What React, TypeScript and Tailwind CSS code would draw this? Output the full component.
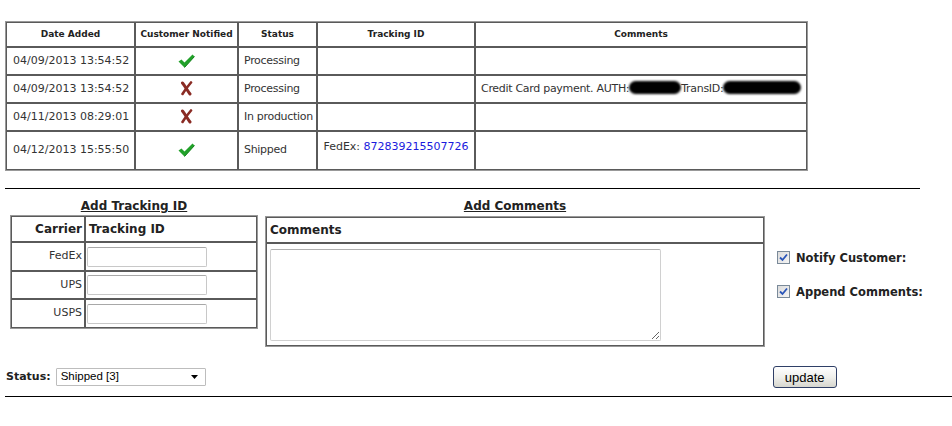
import React from "react";

type Row = {
  date: string;
  notified: boolean;
  status: string;
  tracking?: boolean;
  comment?: boolean;
  tall?: boolean;
};

const rows: Row[] = [
  { date: "04/09/2013 13:54:52", notified: true, status: "Processing" },
  { date: "04/09/2013 13:54:52", notified: false, status: "Processing", comment: true },
  { date: "04/11/2013 08:29:01", notified: false, status: "In production" },
  { date: "04/12/2013 15:55:50", notified: true, status: "Shipped", tracking: true, tall: true },
];

function Check() {
  return (
    <svg width="17" height="14" viewBox="0 0 17 14" className="inline-block">
      <path d="M0.5 7.5 L3.5 5.5 L6.5 8.5 L14.5 0.5 L16.5 2.5 L6.5 13.5 Z" fill="#22a12a" />
      <path d="M6.5 13.5 L16.5 2.5" stroke="#12801a" strokeWidth="1" />
    </svg>
  );
}

function Cross() {
  return (
    <svg width="13" height="15" viewBox="0 0 13 15" className="inline-block">
      <path d="M2.5 2 C5 5 7 9 10 13" stroke="#8a2b24" strokeWidth="3" strokeLinecap="round" fill="none" />
      <path d="M11 1.5 C8 5 5 9 2.5 13" stroke="#8a2b24" strokeWidth="2.6" strokeLinecap="round" fill="none" />
    </svg>
  );
}

function Blob({ w }: { w: number }) {
  return (
    <span
      className="inline-block h-[13px] bg-black rounded-full blur-[1px] align-middle -mt-[2px]"
      style={{ width: w }}
    />
  );
}

function Checkbox() {
  return (
    <span className="inline-flex items-center justify-center w-[13px] h-[13px] border border-[#7a8a99] bg-gradient-to-br from-[#dcdcdc] to-[#f4f4f4]">
      <svg width="9" height="9" viewBox="0 0 9 9">
        <path d="M1 4.5 L3.5 7 L8 1.5" stroke="#2a55b8" strokeWidth="1.8" fill="none" />
      </svg>
    </span>
  );
}

const th = "border border-[#5a5a5a] font-bold text-[9px] text-[#222] text-center whitespace-nowrap";
const td = "border border-[#5a5a5a] text-[11px] text-[#333] whitespace-nowrap";

export default function App() {
  return (
    <div className="w-[952px] h-[426px] bg-white font-['DejaVu_Sans',Verdana,sans-serif] pt-[21px] overflow-hidden">
      <table className="ml-[5px] w-[803px] border-separate border-spacing-0 border border-[#999] table-fixed">
        <colgroup>
          <col className="w-[129px]" />
          <col className="w-[103px]" />
          <col className="w-[79px]" />
          <col className="w-[158px]" />
          <col />
        </colgroup>
        <thead>
          <tr className="h-[25px]">
            <th className={th}>Date Added</th>
            <th className={th}>Customer Notified</th>
            <th className={th}>Status</th>
            <th className={th}>Tracking ID</th>
            <th className={th}>Comments</th>
          </tr>
        </thead>
        <tbody>
          {rows.map((r, i) => (
            <tr key={i} className={r.tall ? "h-[39px]" : "h-[28px]"}>
              <td className={td + " pl-[6px]"}>{r.date}</td>
              <td className={td + " text-center"}>{r.notified ? <Check /> : <Cross />}</td>
              <td className={td + " pl-[5px] text-[10px] tracking-[-0.3px] overflow-hidden"}>{r.status}</td>
              <td className={td + " text-center align-top pt-[7px] text-[10px]"}>
                {r.tracking && (
                  <>
                    FedEx: <span className="text-[#1a1add] text-[11px]">872839215507726</span>
                  </>
                )}
              </td>
              <td className={td + " pl-[5px] text-[10px] tracking-[-0.3px]"}>
                {r.comment && (
                  <>
                    Credit Card payment. AUTH:<Blob w={52} />TransID:<Blob w={78} />
                  </>
                )}
              </td>
            </tr>
          ))}
        </tbody>
      </table>

      <div className="ml-[5px] mt-[17px] w-[915px] h-px bg-black" />

      <div className="flex items-start">
        <div className="ml-[10px] w-[248px]">
          <div className="mt-[9px] h-[17px] leading-[17px] text-center text-[12px] font-bold text-[#222]">
            <span className="underline">Add Tracking ID</span>
          </div>
          <table className="w-[248px] border-separate border-spacing-0 border border-[#999] table-fixed">
            <colgroup>
              <col className="w-[74px]" />
              <col />
            </colgroup>
            <thead>
              <tr className="h-[26px]">
                <th className="border border-[#5a5a5a] text-right pr-[2px] text-[12px] font-bold text-[#222]">Carrier</th>
                <th className="border border-[#5a5a5a] text-left pl-[3px] text-[12px] font-bold text-[#222]">Tracking ID</th>
              </tr>
            </thead>
            <tbody>
              {["FedEx", "UPS", "USPS"].map((c, i) => (
                <tr key={c} className={i === 1 ? "h-[28px]" : "h-[29px]"}>
                  <td className="border border-[#5a5a5a] text-right pr-[2px] text-[11px] text-[#333]">{c}</td>
                  <td className="border border-[#5a5a5a] pl-[1px]">
                    <input className="block w-[120px] h-[20px] border border-[#c8c8c8] border-t-[#a8a8a8] rounded-[2px] bg-white outline-none" />
                  </td>
                </tr>
              ))}
            </tbody>
          </table>
        </div>

        <div className="ml-[7px] w-[500px]">
          <div className="mt-[9px] h-[17px] leading-[17px] text-center text-[12px] font-bold text-[#222]">
            <span className="underline">Add Comments</span>
          </div>
          <table className="mt-px w-[500px] border-separate border-spacing-0 border border-[#999]">
            <thead>
              <tr className="h-[26px]">
                <th className="border border-[#5a5a5a] text-left pl-[3px] text-[12px] font-bold text-[#222]">Comments</th>
              </tr>
            </thead>
            <tbody>
              <tr className="h-[103px]">
                <td className="border border-[#5a5a5a] pl-[3px] align-middle">
                  <textarea className="block w-[391px] h-[92px] border border-[#d0d0d0] border-t-[#b0b0b0] rounded-[2px] outline-none resize" />
                </td>
              </tr>
            </tbody>
          </table>
        </div>

        <div className="ml-[12px] pt-[62px] flex flex-col gap-[21px] text-[11.5px] font-bold text-[#222]">
          <div className="flex items-center gap-[6px] h-[13px]">
            <Checkbox />
            <span className="mt-[3px]">Notify Customer:</span>
          </div>
          <div className="flex items-center gap-[6px] h-[13px]">
            <Checkbox />
            <span className="mt-[3px]">Append Comments:</span>
          </div>
        </div>
      </div>

      <div className="mt-[19px] flex items-center h-[22px]">
        <span className="ml-[6px] text-[11px] font-bold text-[#222]">Status:</span>
        <div className="ml-[5px] w-[150px] h-[18px] border border-[#bdbdbd] rounded-[1px] flex items-center justify-between pl-[4px] pr-[7px] font-['Liberation_Sans',Arial,sans-serif] text-[11.5px] text-black">
          <span>Shipped [3]</span>
          <svg width="7" height="4" viewBox="0 0 7 4">
            <path d="M0 0 H7 L3.5 4 Z" fill="#000" />
          </svg>
        </div>
        <button className="ml-[567px] w-[64px] h-[22px] border border-[#2f3f66] rounded-[3px] bg-gradient-to-b from-[#ffffff] via-[#f0f0ec] to-[#d6d6ce] font-['Liberation_Sans',Arial,sans-serif] text-[13px] text-black leading-none">
          update
        </button>
      </div>

      <div className="ml-[5px] mt-[8px] h-px bg-black" />
    </div>
  );
}
